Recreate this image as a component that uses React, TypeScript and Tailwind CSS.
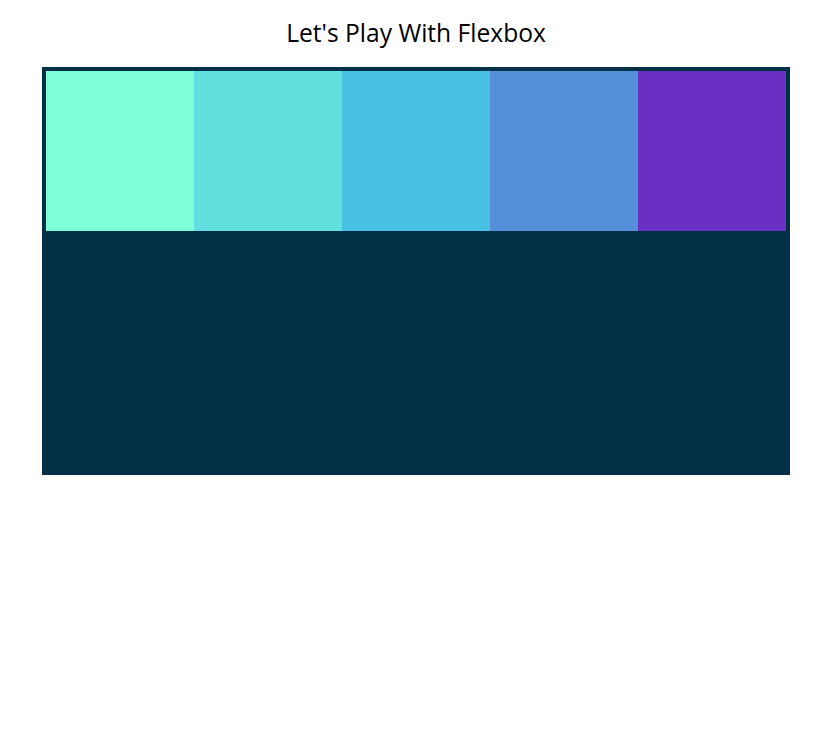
export default function App() {
  const boxes = ['#80ffdb', '#64dfdf', '#48bfe3', '#5390d9', '#6930c3'];
  return (
    <div className="min-h-[734px] bg-white font-['Open_Sans',sans-serif]">
      <div className="ml-[42px] w-[748px]">
        <h1 className="flex h-[67px] items-center justify-center text-[24.6px] font-normal text-black">
          Let's Play With Flexbox
        </h1>
        <div className="flex h-[408px] items-start bg-[#023047] p-[4px]">
          {boxes.map((c) => (
            <div key={c} className="h-[160px] flex-1" style={{ backgroundColor: c }} />
          ))}
        </div>
      </div>
    </div>
  );
}
